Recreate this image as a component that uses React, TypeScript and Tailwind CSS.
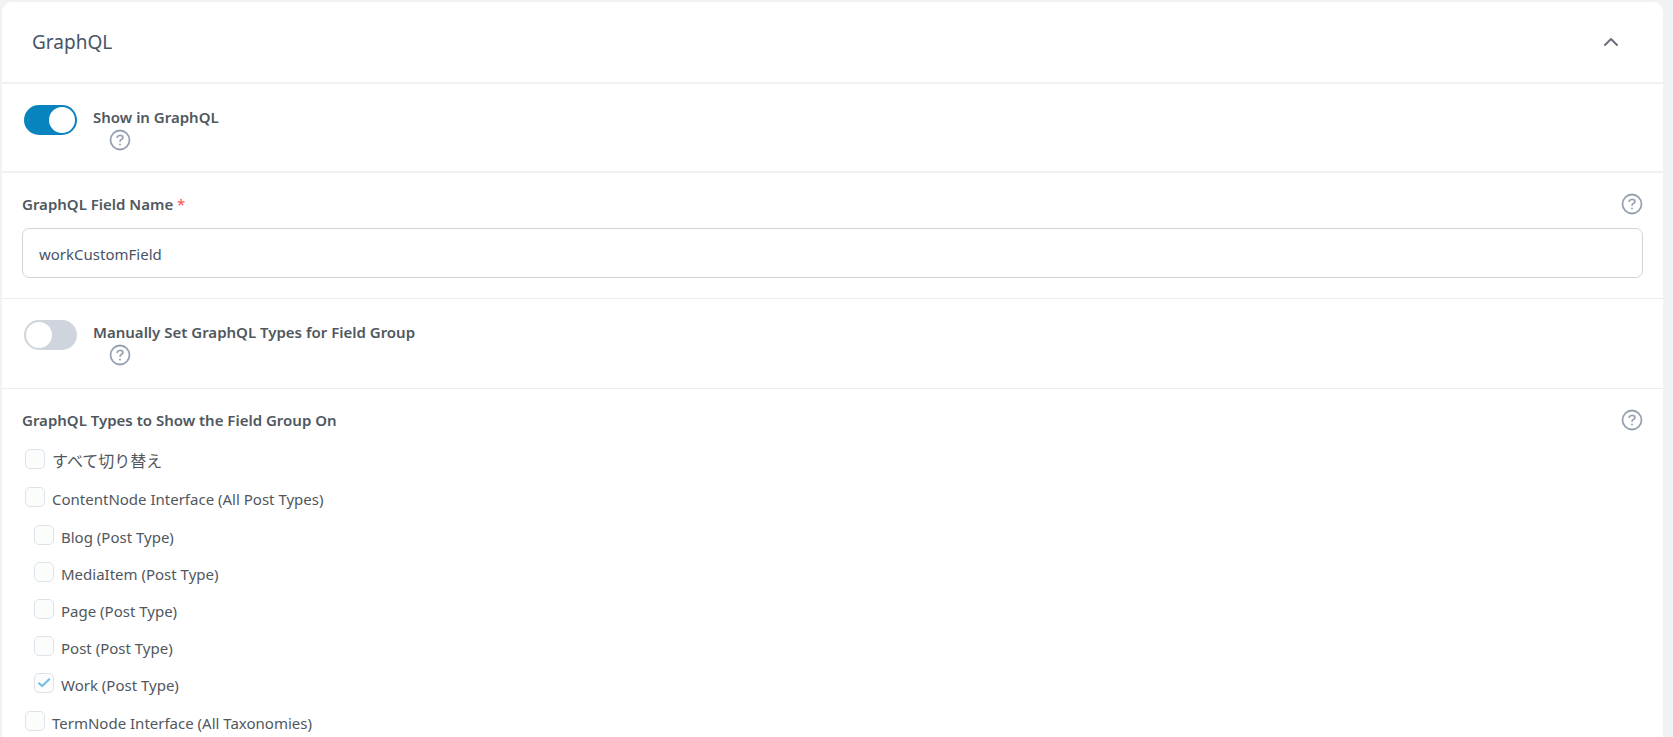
import { useState, type ReactNode } from 'react';
import { ChevronUp } from 'lucide-react';

interface TypeOption {
  id: string;
  label: string;
  lang?: string;
  children?: TypeOption[];
}

const TYPE_OPTIONS: TypeOption[] = [
  { id: 'all', label: 'すべて切り替え', lang: 'ja' },
  {
    id: 'content-node',
    label: 'ContentNode Interface (All Post Types)',
    children: [
      { id: 'blog', label: 'Blog (Post Type)' },
      { id: 'media-item', label: 'MediaItem (Post Type)' },
      { id: 'page', label: 'Page (Post Type)' },
      { id: 'post', label: 'Post (Post Type)' },
      { id: 'work', label: 'Work (Post Type)' },
    ],
  },
  { id: 'term-node', label: 'TermNode Interface (All Taxonomies)' },
];

function HelpTip() {
  return (
    <button type="button" aria-label="Help" className="block size-[22px] shrink-0 text-[#98a2b3]">
      <svg viewBox="0 0 22 22" fill="none" stroke="currentColor" className="size-full" strokeLinecap="round">
        <circle cx="11" cy="11" r="9.5" strokeWidth="1.8" />
        <path d="M8.2 8.3c.4-1.3 1.4-2 2.8-2 1.7 0 2.9.9 2.9 2.3 0 1.8-2.8 1.9-2.8 3.4" strokeWidth="1.8" />
        <path d="M11 15.4v.1" strokeWidth="2" />
      </svg>
    </button>
  );
}

interface ToggleRowProps {
  id: string;
  label: string;
  defaultChecked?: boolean;
}

function ToggleRow({ id, label, defaultChecked = false }: ToggleRowProps) {
  const [checked, setChecked] = useState(defaultChecked);

  return (
    <div className="flex items-start gap-4">
      <input
        id={id}
        type="checkbox"
        role="switch"
        checked={checked}
        onChange={(e) => setChecked(e.target.checked)}
        className="h-[30px] w-[53px] shrink-0 cursor-pointer appearance-none rounded-full bg-[#d0d5dd] p-[2px] before:block before:size-[26px] before:rounded-full before:bg-white checked:bg-[#0783be] checked:before:ml-[23px]"
      />
      <div>
        <label htmlFor={id} className="block leading-6 font-semibold">
          {label}
        </label>
        <div className="pl-4">
          <HelpTip />
        </div>
      </div>
    </div>
  );
}

function TypeCheckbox({ option }: { option: TypeOption }) {
  const [checked, setChecked] = useState(option.id === 'work');

  return (
    <li>
      <label className="flex h-5 items-center gap-[7px] whitespace-nowrap">
        <span className="grid size-5 shrink-0">
          <input
            type="checkbox"
            checked={checked}
            onChange={(e) => setChecked(e.target.checked)}
            className="peer col-start-1 row-start-1 size-5 appearance-none rounded-[5px] border border-[#dfe2ea] bg-[#fbfdfd]"
          />
          <svg
            viewBox="0 0 20 20"
            fill="none"
            stroke="#76bfe2"
            strokeWidth="2.2"
            className="pointer-events-none invisible col-start-1 row-start-1 size-5 peer-checked:visible"
          >
            <path d="M4.5 9.700l3.600 3.400 7.700-7.400" />
          </svg>
        </span>
        <span lang={option.lang} className="pt-1 [&:lang(ja)]:text-[16px]">
          {option.label}
        </span>
      </label>
      {option.children && (
        <ul className="mt-[18px] ml-[9px] flex flex-col gap-[17px]">
          {option.children.map((child) => (
            <TypeCheckbox key={child.id} option={child} />
          ))}
        </ul>
      )}
    </li>
  );
}

function Section({ children, className }: { children: ReactNode; className: string }) {
  return <section className={className}>{children}</section>;
}

export default function App() {
  const [isOpen, setIsOpen] = useState(true);
  const [fieldName, setFieldName] = useState('workCustomField');

  return (
    <div className="h-screen overflow-hidden bg-[#f1f2f4] pt-[2px] pr-[10px] pl-[2px] font-['Noto_Sans','Noto_Sans_CJK_JP',sans-serif] text-[15px] text-[#50575e]">
      <div className="min-h-full rounded-t-[10px] bg-white">
        {/* Header */}
        <header className="flex h-[82px] items-center justify-between border-b-2 border-[#eff1f3] pr-10 pl-[30px]">
          <h2 className="text-[19px] text-[#475467]">GraphQL</h2>
          <button type="button" aria-label="Toggle panel" aria-expanded={isOpen} onClick={() => setIsOpen(!isOpen)}>
            <ChevronUp className="size-6 text-[#6b6f7b]" />
          </button>
        </header>

        {isOpen && (
          <>
            <Section className="border-b-2 border-[#eff1f3] px-[22px] pt-[21px] pb-5">
              <ToggleRow id="show-in-graphql" label="Show in GraphQL" defaultChecked />
            </Section>

            {/* Field name */}
            <Section className="border-b border-[#eaecf0] px-5 pt-5 pb-5">
              <div className="mb-[13px] flex h-[22px] items-center justify-between">
                <label htmlFor="field-name" className="font-semibold">
                  GraphQL Field Name <span className="font-normal text-[#ff4d4d]">*</span>
                </label>
                <HelpTip />
              </div>
              <input
                id="field-name"
                type="text"
                value={fieldName}
                onChange={(e) => setFieldName(e.target.value)}
                className="h-[50px] w-full rounded-[7px] border border-[#d0d5dd] px-4 pt-px text-[#475467] outline-none"
              />
            </Section>

            <Section className="border-b border-[#eaecf0] px-[22px] pt-[21px] pb-[22px]">
              <ToggleRow id="manual-types" label="Manually Set GraphQL Types for Field Group" />
            </Section>

            {/* Types */}
            <Section className="px-5 pt-5">
              <fieldset>
                <div className="mb-[18px] flex h-[22px] items-center justify-between">
                  <legend className="font-semibold">GraphQL Types to Show the Field Group On</legend>
                  <HelpTip />
                </div>
                <ul className="flex flex-col gap-[18px] pl-[3px]">
                  {TYPE_OPTIONS.map((option) => (
                    <TypeCheckbox key={option.id} option={option} />
                  ))}
                </ul>
              </fieldset>
            </Section>
          </>
        )}
      </div>
    </div>
  );
}
